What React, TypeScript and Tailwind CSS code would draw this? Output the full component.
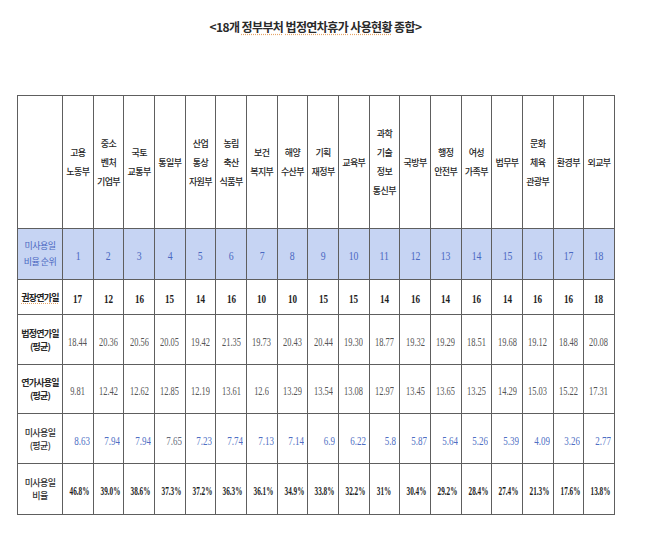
const depts: string[][] = [
  ["고용", "노동부"],
  ["중소", "벤처", "기업부"],
  ["국토", "교통부"],
  ["통일부"],
  ["산업", "통상", "자원부"],
  ["농림", "축산", "식품부"],
  ["보건", "복지부"],
  ["해양", "수산부"],
  ["기획", "재정부"],
  ["교육부"],
  ["과학", "기술", "정보", "통신부"],
  ["국방부"],
  ["행정", "안전부"],
  ["여성", "가족부"],
  ["법무부"],
  ["문화", "체육", "관광부"],
  ["환경부"],
  ["외교부"],
];

const recommended = ["17", "12", "16", "15", "14", "16", "10", "10", "15", "15", "14", "16", "14", "16", "14", "16", "16", "18"];
const legal = ["18.44", "20.36", "20.56", "20.05", "19.42", "21.35", "19.73", "20.43", "20.44", "19.30", "18.77", "19.32", "19.29", "18.51", "19.68", "19.12", "18.48", "20.08"];
const used = ["9.81", "12.42", "12.62", "12.85", "12.19", "13.61", "12.6", "13.29", "13.54", "13.08", "12.97", "13.45", "13.65", "13.25", "14.29", "15.03", "15.22", "17.31"];
const unused = ["8.63", "7.94", "7.94", "7.65", "7.23", "7.74", "7.13", "7.14", "6.9", "6.22", "5.8", "5.87", "5.64", "5.26", "5.39", "4.09", "3.26", "2.77"];
const ratio = ["46.8%", "39.0%", "38.6%", "37.3%", "37.2%", "36.3%", "36.1%", "34.9%", "33.8%", "32.2%", "31%", "30.4%", "29.2%", "28.4%", "27.4%", "21.3%", "17.6%", "13.8%"];

const cell = "border border-[#5e5e5e] p-0 align-middle";
const kor = "font-['Noto_Sans_CJK_KR',sans-serif]";
const num = "inline-block font-['Liberation_Serif',serif]";

function Label({ lines, className = "" }: { lines: string[]; className?: string }) {
  return (
    <div className={`${kor} text-[9px] leading-[13px] ${className}`}>
      {lines.map((l) => (
        <div key={l}>{l}</div>
      ))}
    </div>
  );
}

export default function App() {
  return (
    <div className="h-[534px] w-[647px] bg-white">
      <div className="ml-[17px] h-[95px] w-[597px] pt-[14px] text-center">
        <span className={`${kor} text-[12px] font-bold tracking-[-0.6px] text-[#2a2a2a]`}>
          &lt;18개{" "}
          <span className="underline decoration-[#e4a66a] decoration-dotted underline-offset-2">정부부처</span>{" "}
          <span className="underline decoration-[#e4a66a] decoration-dotted underline-offset-2">법정연차휴가</span>{" "}
          <span className="underline decoration-[#e4a66a] decoration-dotted underline-offset-2">사용현황</span> 종합&gt;
        </span>
      </div>

      <table className="ml-[17px] w-[597px] table-fixed border-collapse text-center">
        <colgroup>
          <col className="w-[45px]" />
          {depts.map((_, i) => (
            <col key={i} className="w-[30.67px]" />
          ))}
        </colgroup>
        <tbody>
          <tr className="h-[133px]">
            <td className={cell}></td>
            {depts.map((d, i) => (
              <td key={i} className={cell}>
                <div className={`${kor} text-[9px] font-medium leading-[19px] tracking-[-0.6px] text-[#262626]`}>
                  {d.map((l) => (
                    <div key={l}>{l}</div>
                  ))}
                </div>
              </td>
            ))}
          </tr>

          <tr className="h-[51px] bg-[#c6d4f3]">
            <td className={cell}>
              <Label lines={["미사용일", "비율 순위"]} className="leading-[16px] tracking-[-0.5px] text-[#4a68c2]" />
            </td>
            {depts.map((_, i) => (
              <td key={i} className={cell}>
                <span className={`${num} scale-x-75 text-[13px] text-[#4a68c2]`}>{i + 1}</span>
              </td>
            ))}
          </tr>

          <tr className="h-[35px]">
            <td className={cell}>
              <Label
                lines={["권장연가일"]}
                className="font-bold tracking-[-0.8px] text-[#222] underline decoration-[#e4a66a] decoration-dotted underline-offset-2"
              />
            </td>
            {recommended.map((v, i) => (
              <td key={i} className={cell}>
                <span className={`${num} scale-x-70 text-[13px] font-bold text-[#1e1e1e]`}>{v}</span>
              </td>
            ))}
          </tr>

          <tr className="h-[50px]">
            <td className={cell}>
              <Label lines={["법정연가일", "(평균)"]} className="font-bold tracking-[-0.8px] text-[#2a2a2a]" />
            </td>
            {legal.map((v, i) => (
              <td key={i} className={cell}>
                <span className={`${num} scale-x-70 text-[12px] text-[#555]`}>{v}</span>
              </td>
            ))}
          </tr>

          <tr className="h-[49px]">
            <td className={cell}>
              <Label lines={["연가사용일", "(평균)"]} className="font-bold tracking-[-0.8px] text-[#2a2a2a]" />
            </td>
            {used.map((v, i) => (
              <td key={i} className={cell}>
                <span className={`${num} scale-x-70 text-[12px] text-[#555]`}>{v}</span>
              </td>
            ))}
          </tr>

          <tr className="h-[50px]">
            <td className={cell}>
              <Label lines={["미사용일", "(평균)"]} className="font-medium tracking-[-0.6px] text-[#333]" />
            </td>
            {unused.map((v, i) => (
              <td key={i} className={`${cell} pr-[3px] text-right`}>
                <span className={`${num} origin-right scale-x-75 text-[12px] ${i === 3 ? "text-[#666b7a]" : "text-[#4f6fc4]"}`}>
                  {v}
                </span>
              </td>
            ))}
          </tr>

          <tr className="h-[51px]">
            <td className={cell}>
              <Label lines={["미사용일", "비율"]} className="font-medium tracking-[-0.6px] text-[#333]" />
            </td>
            {ratio.map((v, i) => (
              <td key={i} className={cell}>
                <span className={`${num} scale-x-[0.6] text-[12px] font-bold text-[#1e1e1e]`}>{v}</span>
              </td>
            ))}
          </tr>
        </tbody>
      </table>
    </div>
  );
}
